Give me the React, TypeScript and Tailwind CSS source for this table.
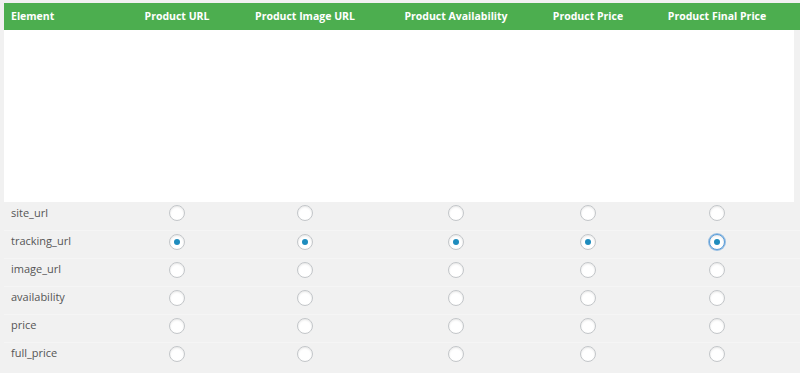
import React, { useState } from 'react';

const columns = [
  { key: 'url', label: 'Product URL' },
  { key: 'image', label: 'Product Image URL' },
  { key: 'availability', label: 'Product Availability' },
  { key: 'price', label: 'Product Price' },
  { key: 'final', label: 'Product Final Price' },
];

const elements = ['site_url', 'tracking_url', 'image_url', 'availability', 'price', 'full_price'];

const gridCols = 'grid grid-cols-[117px_112px_144px_158px_106px_152px]';

const Radio = ({ checked, focused, onChange }: { checked: boolean; focused?: boolean; onChange: () => void }) => (
  <button
    type="button"
    onClick={onChange}
    className={
      'flex h-[16px] w-[16px] items-center justify-center rounded-full border bg-white shadow-[inset_0_1px_2px_rgba(0,0,0,0.1)] ' +
      (focused ? 'border-[#5b9dd9] ring-1 ring-[#5b9dd9]/60' : 'border-[#c3c6c9]')
    }
  >
    {checked && <span className="h-[6px] w-[6px] rounded-full bg-[#1e8cbe]" />}
  </button>
);

export default function App() {
  // each column maps to the element row it reads from
  const [mapping, setMapping] = useState<Record<string, string>>({
    url: 'tracking_url',
    image: 'tracking_url',
    availability: 'tracking_url',
    price: 'tracking_url',
    final: 'tracking_url',
  });

  return (
    <div className="min-h-[373px] w-[800px] bg-[#f1f1f1] pl-[4px] pt-[3px] font-['Open_Sans',sans-serif]">
      <div className={`${gridCols} h-[27px] items-center bg-[#4cae4f] text-[10.5px] font-bold text-white`}>
        <div className="pl-[7px]">Element</div>
        {columns.map((c) => (
          <div key={c.key} className="text-center">
            {c.label}
          </div>
        ))}
      </div>
      <div className="h-[172px] w-[790px] bg-white" />
      {elements.map((el, i) => (
        <div
          key={el}
          className={`${gridCols} h-[28px] items-center pb-[6px] text-[11px] text-[#555] ${i > 0 ? 'border-t border-[#f5f5f5]' : ''}`}
        >
          <div className="pl-[7px]">{el}</div>
          {columns.map((c) => (
            <div key={c.key} className="flex justify-center">
              <Radio
                checked={mapping[c.key] === el}
                focused={c.key === 'final' && mapping[c.key] === el}
                onChange={() => setMapping({ ...mapping, [c.key]: el })}
              />
            </div>
          ))}
        </div>
      ))}
    </div>
  );
}
